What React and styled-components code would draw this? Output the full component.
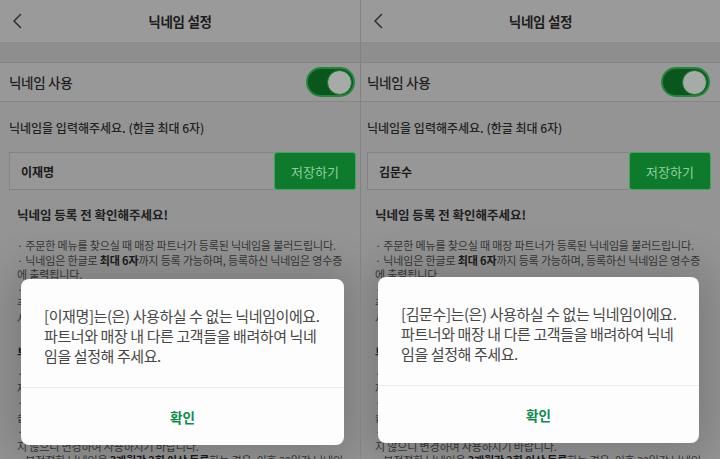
import styled, { createGlobalStyle } from 'styled-components';

const GlobalStyle = createGlobalStyle`
  html, body {
    margin: 0;
    padding: 0;
    background: #939393;
  }
  body {
    font-family: "Noto Sans CJK KR", "Noto Sans", sans-serif;
    color: #2a2a2a;
  }
`;

const Page = styled.div`
  display: flex;
  width: 720px;
  height: 459px;
  overflow: hidden;
`;

const Screen = styled.div`
  position: relative;
  width: ${p => p.$width}px;
  flex-shrink: 0;
  height: 100%;
  display: flex;
  flex-direction: column;
  background: #949494;
  overflow: hidden;
`;

const Divider = styled.div`
  width: 1px;
  flex-shrink: 0;
  background: #838383;
`;

const Header = styled.header`
  height: 43px;
  flex-shrink: 0;
  box-sizing: border-box;
  display: grid;
  grid-template-columns: 40px 1fr 40px;
  align-items: center;
  background: #9a9a9a;
  border-bottom: 1px solid #8a8a8a;
`;

const BackButton = styled.button`
  border: 0;
  background: none;
  padding: 0 0 0 12px;
  height: 100%;
  display: flex;
  align-items: center;
`;

const Title = styled.h1`
  margin: 0;
  text-align: center;
  font-size: 13.5px;
  font-weight: 700;
  letter-spacing: -0.3px;
  color: #1c1c1c;
`;

const Band = styled.div`
  height: 19px;
  flex-shrink: 0;
  background: #8e8e8e;
  border-bottom: 1px solid #868686;
`;

const ToggleRow = styled.div`
  height: 39px;
  flex-shrink: 0;
  box-sizing: border-box;
  display: flex;
  align-items: center;
  justify-content: space-between;
  padding: 0 ${p => p.$padR + 1}px 0 ${p => p.$padL}px;
  background: #989898;
  border-bottom: 1px solid #878787;
`;

const RowLabel = styled.span`
  font-size: 13.5px;
  font-weight: 500;
  letter-spacing: -0.3px;
  color: #1e1e1e;
`;

const Track = styled.div`
  width: 49px;
  height: 30px;
  box-sizing: border-box;
  border-radius: 15px;
  padding: 0 1px;
  display: flex;
  align-items: center;
  justify-content: ${p => (p.$on ? 'flex-end' : 'flex-start')};
  background: #0a561c;
  border: 2px solid #22873a;
`;

const Knob = styled.div`
  width: 25px;
  height: 25px;
  box-sizing: border-box;
  border-radius: 50%;
  background: #a7aba7;
  border: 1.5px solid #17782e;
`;

const Content = styled.div`
  flex: 1;
  padding: 0 ${p => p.$padR}px 0 ${p => p.$padL}px;
`;

const FieldLabel = styled.p`
  margin: 17px 0 0;
  font-size: 12px;
  line-height: 18px;
  font-weight: 500;
  color: #222;
`;

const InputRow = styled.div`
  display: flex;
  height: 38px;
  margin-top: 15px;
`;

const NameInput = styled.div`
  flex: 1;
  box-sizing: border-box;
  display: flex;
  align-items: center;
  padding-left: 11px;
  background: #979797;
  border: 1px solid #838383;
  border-right: 0;
  font-size: 12px;
  font-weight: 700;
  color: #1a1a1a;
`;

const SaveButton = styled.button`
  width: 82px;
  box-sizing: border-box;
  border: 1px solid #3ea65e;
  border-radius: 3px;
  background: #0e7a2c;
  color: #8fcfa3;
  font-family: inherit;
  font-size: 13px;
  padding: 0;
`;

const Notice = styled.section`
  padding: 0 10px 0 8px;
  margin-top: 16px;
`;

const NoticeTitle = styled.h2`
  margin: 0;
  font-size: 12.5px;
  line-height: 18px;
  font-weight: 700;
  color: #202020;
  margin-top: ${p => p.$gap || 0}px;
`;

const NoticeList = styled.div`
  margin-top: ${p => p.$gap}px;
  font-size: 11px;
  line-height: 14.5px;
  letter-spacing: -0.15px;
  color: #363636;

  p {
    margin: 0;
  }
  b {
    color: #1a1a1a;
  }
`;

const Dialog = styled.div`
  position: absolute;
  top: ${p => p.$top}px;
  left: ${p => p.$left}px;
  width: ${p => p.$width}px;
  display: flex;
  flex-direction: column;
  background: #fdfdfd;
  border-radius: 8px;
  box-shadow: 0 0 40px 12px rgba(0, 0, 0, 0.16);
`;

const Message = styled.p`
  margin: 0;
  padding: 27px 21px 21px 23px;
  font-size: 15px;
  line-height: 20px;
  letter-spacing: -0.4px;
  color: #474747;
  word-break: break-all;
`;

const DialogFooter = styled.div`
  height: 57px;
  display: flex;
  align-items: center;
  justify-content: center;
  border-top: 1px solid #ececec;
`;

const ConfirmButton = styled.button`
  border: 0;
  background: none;
  padding: 0;
  font-family: inherit;
  font-size: 13.5px;
  font-weight: 700;
  color: #0f8a4f;
`;

const BackIcon = () => (
  <svg width="10" height="16" viewBox="0 0 10 16">
    <path d="M8.5 1.5 L2 8 L8.5 14.5" fill="none" stroke="#2e2e2e" strokeWidth="1.5" strokeLinecap="round" strokeLinejoin="round" />
  </svg>
);

const screens = [
  { name: '이재명', width: 360, padL: 9, padR: 4, dialog: { top: 279, left: 21, width: 323 } },
  { name: '김문수', width: 359, padL: 6, padR: 9, dialog: { top: 277, left: 17, width: 321 } },
];

const NicknameScreen = ({ name, width, padL, padR, dialog }) => (
  <Screen $width={width}>
    <Header>
      <BackButton><BackIcon /></BackButton>
      <Title>닉네임 설정</Title>
      <span />
    </Header>
    <Band />
    <ToggleRow $padL={padL} $padR={padR}>
      <RowLabel>닉네임 사용</RowLabel>
      <Track $on><Knob /></Track>
    </ToggleRow>
    <Content $padL={padL} $padR={padR}>
      <FieldLabel>닉네임을 입력해주세요. (한글 최대 6자)</FieldLabel>
      <InputRow>
        <NameInput>{name}</NameInput>
        <SaveButton>저장하기</SaveButton>
      </InputRow>
      <Notice>
        <NoticeTitle>닉네임 등록 전 확인해주세요!</NoticeTitle>
        <NoticeList $gap={14}>
          <p>· 주문한 메뉴를 찾으실 때 매장 파트너가 등록된 닉네임을 불러드립니다.</p>
          <p>· 닉네임은 한글로 <b>최대 6자</b>까지 등록 가능하며, 등록하신 닉네임은 영수증<br />에 출력됩니다.</p>
          <p>· 닉네임 사용을 원하지 않으시면 상단의 닉네임 사용 버튼을 해제해</p>
          <p>주세요. 해제 시에는 주문 번호로 안내해 드립니다.</p>
          <p>사이렌 오더 주문 시에만 닉네임을 불러드립니다.</p>
        </NoticeList>
        <NoticeTitle $gap={19}>부적절한 닉네임 안내</NoticeTitle>
        <NoticeList $gap={4}>
          <p>· 욕설, 비속어 등 타인에게 불쾌감을 줄 수 있는 닉네임은 등록이<br />제한됩니다.</p>
          <p>· 특정 인물, 브랜드를 연상시키는 닉네임은 사용이 제한될 수 있<br />습니다.</p>
          <p>· 등록하신 닉네임이 부적절하다고 판단될 경우 파트너가 불러드리<br />지 않으니 변경하여 사용하시기 바랍니다.</p>
          <p>· 부적절한 닉네임을 <b>3개월간 2회 이상 등록</b>하는 경우, 이후 30일간 닉네임<br />사용이 제한됩니다.</p>
        </NoticeList>
      </Notice>
    </Content>
    <Dialog $top={dialog.top} $left={dialog.left} $width={dialog.width}>
      <Message>[{name}]는(은) 사용하실 수 없는 닉네임이에요. 파트너와 매장 내 다른 고객들을 배려하여 닉네임을 설정해 주세요.</Message>
      <DialogFooter>
        <ConfirmButton>확인</ConfirmButton>
      </DialogFooter>
    </Dialog>
  </Screen>
);

export default function App() {
  return (
    <>
      <GlobalStyle />
      <Page>
        <NicknameScreen {...screens[0]} />
        <Divider />
        <NicknameScreen {...screens[1]} />
      </Page>
    </>
  );
}
